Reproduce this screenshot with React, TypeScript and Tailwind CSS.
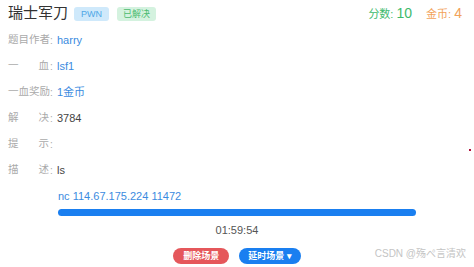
import React from 'react';

const rows: { label: string[]; value: string; tone?: 'link' | 'text' }[] = [
  { label: ['题', '目', '作', '者'], value: 'harry', tone: 'link' },
  { label: ['一', '血'], value: 'lsf1', tone: 'link' },
  { label: ['一', '血', '奖', '励'], value: '1金币', tone: 'link' },
  { label: ['解', '决'], value: '3784', tone: 'text' },
  { label: ['提', '示'], value: '' },
  { label: ['描', '述'], value: 'ls', tone: 'text' },
];

export default function App() {
  return (
    <div
      className="relative w-[474px] h-[267px] overflow-hidden bg-white"
      style={{ fontFamily: '"Liberation Sans", "Noto Sans CJK SC", sans-serif' }}
    >
      {/* Header */}
      <div className="flex items-center h-[27px] pl-[8px] pr-[12px]">
        <span className="text-[15px] text-[#333]">瑞士军刀</span>
        <span className="ml-[6px] px-[7px] h-[14px] leading-[14px] text-[9px] rounded-[3px] bg-[#cfe9fb] text-[#4ea7e6]">PWN</span>
        <span className="ml-[8px] px-[6px] h-[14px] leading-[14px] text-[9px] rounded-[3px] bg-[#d4f2df] text-[#4cbb70]">已解决</span>
        <div className="ml-auto flex items-baseline gap-[14px]">
          <span className="text-[#3dba6c] text-[11px]">
            分数: <span className="text-[14px]">10</span>
          </span>
          <span className="text-[#f2a25a] text-[11px]">
            金币: <span className="text-[14px]">4</span>
          </span>
        </div>
      </div>

      {/* Info rows */}
      <div className="pl-[8px]">
        {rows.map((r) => (
          <div key={r.label.join('')} className="flex items-center h-[26px] text-[11px]">
            <span className="flex justify-between w-[41px] text-[10.5px] text-[#aaa]">
              {r.label.map((c, i) => (
                <span key={i}>{c}</span>
              ))}
            </span>
            <span className="text-[#aaa] w-[5px] text-[10px] pl-[1px]">:</span>
            <span className={`ml-[3px] ${r.tone === 'link' ? 'text-[#3b8be0]' : 'text-[#444]'}`}>{r.value}</span>
          </div>
        ))}
      </div>

      {/* Env */}
      <div className="mx-[58px]">
        <div className="h-[26px] flex items-center text-[11px] text-[#3b8be0]">nc 114.67.175.224 11472</div>
        <div className="h-[7px] rounded-full bg-[#1a7ff0]" />
        <div className="mt-[7px] h-[14px] leading-[14px] text-center text-[11px] text-[#555]">01:59:54</div>
        <div className="mt-[11px] flex justify-center gap-[10px]">
          <button className="h-[16px] px-[10px] rounded-full bg-[#e5575b] text-white text-[9px] font-bold leading-[16px]">删除场景</button>
          <button className="h-[16px] px-[9px] rounded-full bg-[#1a7ff0] text-white text-[9px] font-bold leading-[16px]">延时场景 ▾</button>
        </div>
      </div>

      <span className="absolute left-[469px] top-[149px] w-[2px] h-[2px] bg-[#b0103a]" />
      <span className="absolute right-[8px] bottom-[6px] text-[10px] text-[#c4c4c4]">CSDN @殇ぺ言清欢</span>
    </div>
  );
}
